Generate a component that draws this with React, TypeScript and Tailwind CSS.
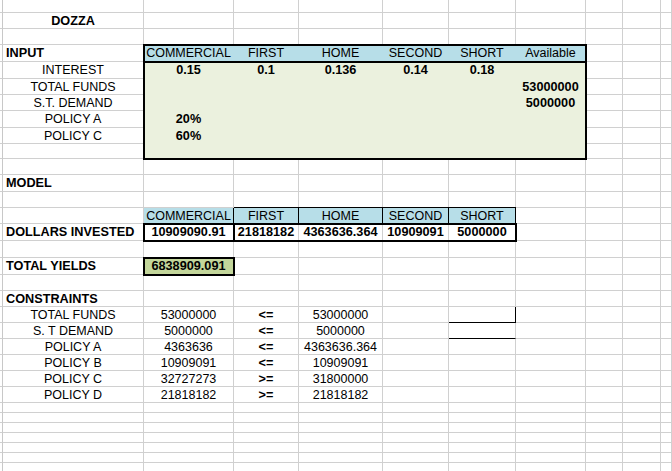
import React from "react";

type C = { t: string; b?: boolean; a?: "l" | "c" };

const ROWS = [13, 16, 16, 17, 17, 16, 16, 17, 16, 15, 16, 17, 16, 16, 17, 17, 17, 16, 16, 16, 16, 16, 16, 16, 16, 10, 10, 10, 10, 10, 10, 10];
const NCOLS = 11;

const T: Record<string, C> = {
  "1,1": { t: "DOZZA", b: true },
  "3,1": { t: "INPUT", b: true, a: "l" },
  "3,2": { t: "COMMERCIAL" },
  "3,3": { t: "FIRST" },
  "3,4": { t: "HOME" },
  "3,5": { t: "SECOND" },
  "3,6": { t: "SHORT" },
  "3,7": { t: "Available" },
  "4,1": { t: "INTEREST" },
  "4,2": { t: "0.15", b: true },
  "4,3": { t: "0.1", b: true },
  "4,4": { t: "0.136", b: true },
  "4,5": { t: "0.14", b: true },
  "4,6": { t: "0.18", b: true },
  "5,1": { t: "TOTAL FUNDS" },
  "5,7": { t: "53000000", b: true },
  "6,1": { t: "S.T. DEMAND" },
  "6,7": { t: "5000000", b: true },
  "7,1": { t: "POLICY A" },
  "7,2": { t: "20%", b: true },
  "8,1": { t: "POLICY C" },
  "8,2": { t: "60%", b: true },
  "11,1": { t: "MODEL", b: true, a: "l" },
  "13,2": { t: "COMMERCIAL" },
  "13,3": { t: "FIRST" },
  "13,4": { t: "HOME" },
  "13,5": { t: "SECOND" },
  "13,6": { t: "SHORT" },
  "14,1": { t: "DOLLARS INVESTED", b: true, a: "l" },
  "14,2": { t: "10909090.91", b: true },
  "14,3": { t: "21818182", b: true },
  "14,4": { t: "4363636.364", b: true },
  "14,5": { t: "10909091", b: true },
  "14,6": { t: "5000000", b: true },
  "16,1": { t: "TOTAL YIELDS", b: true, a: "l" },
  "16,2": { t: "6838909.091", b: true },
  "18,1": { t: "CONSTRAINTS", b: true, a: "l" },
  "19,1": { t: "TOTAL FUNDS" },
  "19,2": { t: "53000000" },
  "19,3": { t: "<=", b: true },
  "19,4": { t: "53000000" },
  "20,1": { t: "S. T DEMAND" },
  "20,2": { t: "5000000" },
  "20,3": { t: "<=", b: true },
  "20,4": { t: "5000000" },
  "21,1": { t: "POLICY A" },
  "21,2": { t: "4363636" },
  "21,3": { t: "<=", b: true },
  "21,4": { t: "4363636.364" },
  "22,1": { t: "POLICY B" },
  "22,2": { t: "10909091" },
  "22,3": { t: "<=", b: true },
  "22,4": { t: "10909091" },
  "23,1": { t: "POLICY C" },
  "23,2": { t: "32727273" },
  "23,3": { t: ">=", b: true },
  "23,4": { t: "31800000" },
  "24,1": { t: "POLICY D" },
  "24,2": { t: "21818182" },
  "24,3": { t: ">=", b: true },
  "24,4": { t: "21818182" },
};

function cellClass(r: number, c: number): string {
  if (r === 3 && c >= 2 && c <= 7) return "bg-[#b7dee8] border-r-[#b7dee8] border-b-[#b7dee8]";
  if (r >= 4 && r <= 9 && c >= 2 && c <= 7) return "bg-[#ebf1de] border-r-[#ebf1de] border-b-[#ebf1de]";
  if (r === 13 && c >= 2 && c <= 6) return "bg-[#b7dee8] border-r-black border-b-black";
  if (r === 16 && c === 2) return "bg-[#c3d69b] border-r-black border-b-black";
  if (r === 19 && c === 6) return "bg-white border-r-black border-b-black";
  if (r === 20 && c === 6) return "bg-white border-r-[#d0d0d0] border-b-black";
  if (c === 0) return "bg-white border-r-[#c8c8c8] border-b-[#d0d0d0]";
  return "bg-white border-r-[#d0d0d0] border-b-[#d0d0d0]";
}

const GRID =
  "grid grid-cols-[3px_141px_90px_65px_84px_66px_67px_70px_37px_38px_1fr] grid-rows-[13px_16px_16px_17px_17px_16px_16px_17px_16px_15px_16px_17px_16px_16px_17px_17px_17px_16px_16px_16px_16px_16px_16px_16px_16px_10px_10px_10px_10px_10px_10px_10px]";

export default function App() {
  const cells: React.ReactNode[] = [];
  ROWS.forEach((_, r) => {
    for (let c = 0; c < NCOLS; c++) {
      const d = T[`${r},${c}`];
      cells.push(
        <div
          key={`${r}-${c}`}
          className={`border-r border-b flex items-center overflow-visible whitespace-nowrap ${cellClass(r, c)} ${
            d && d.a === "l" ? "justify-start pl-[3px]" : "justify-center"
          }`}
        >
          {d ? (
            <span className={`relative z-10 leading-none ${d.b ? "font-bold text-[12.7px]" : "text-[12.5px]"} pt-[1px]`}>
              {d.t}
            </span>
          ) : null}
        </div>
      );
    }
  });

  return (
    <div
      className="w-[672px] h-[471px] overflow-hidden bg-white text-black"
      style={{ fontFamily: '"Liberation Sans", Arial, sans-serif' }}
    >
      <div className="grid">
        <div className={`${GRID} [grid-area:1/1]`}>{cells}</div>
        <div className={`${GRID} [grid-area:1/1] pointer-events-none z-20`}>
          {/* input box */}
          <div className="col-start-3 col-end-9 row-start-4 row-end-11 -m-px border-2 border-black" />
          {/* input header bottom */}
          <div className="col-start-3 col-end-9 row-start-4 row-end-5 -mx-px -mb-px border-b-2 border-black" />
          {/* model header top line */}
          <div className="col-start-4 col-end-8 row-start-13 row-end-14 border-b border-black" />
          {/* dollars invested box */}
          <div className="col-start-3 col-end-8 row-start-15 row-end-16 -m-px border-2 border-black" />
          <div className="col-start-3 col-end-4 row-start-15 row-end-16 -m-px border-r-2 border-black" />
          {/* total yields box */}
          <div className="col-start-3 col-end-4 row-start-17 row-end-18 -m-px border-2 border-black" />
        </div>
      </div>
    </div>
  );
}
